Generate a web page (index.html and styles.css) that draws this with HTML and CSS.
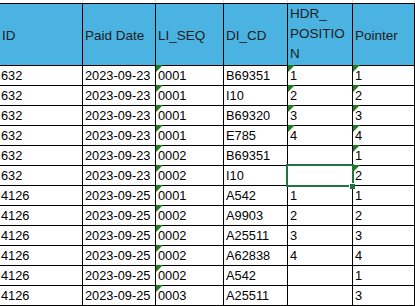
FILE: index.html
```html
<!DOCTYPE html>
<html>
<head>
<meta charset="utf-8">
<link rel="stylesheet" href="styles.css">
</head>
<body>
<div class="sheet">
  <div class="row strip"><div></div><div></div><div></div><div></div><div></div><div></div></div>
  <div class="row head">
    <div class="hc">ID</div>
    <div class="hc">Paid Date</div>
    <div class="hc">LI_SEQ</div>
    <div class="hc">DI_CD</div>
    <div class="hc wrap">HDR_<br>POSITIO<br>N</div>
    <div class="hc">Pointer</div>
  </div>
  <div class="row"><div class="c id">632</div><div class="c">2023-09-23</div><div class="c f">0001</div><div class="c">B69351</div><div class="c f">1</div><div class="c f">1</div></div>
  <div class="row"><div class="c id">632</div><div class="c">2023-09-23</div><div class="c f">0001</div><div class="c">I10</div><div class="c f">2</div><div class="c f">2</div></div>
  <div class="row"><div class="c id">632</div><div class="c">2023-09-23</div><div class="c f">0001</div><div class="c">B69320</div><div class="c f">3</div><div class="c f">3</div></div>
  <div class="row"><div class="c id">632</div><div class="c">2023-09-23</div><div class="c f">0001</div><div class="c">E785</div><div class="c f">4</div><div class="c f">4</div></div>
  <div class="row"><div class="c id">632</div><div class="c">2023-09-23</div><div class="c f">0002</div><div class="c">B69351</div><div class="c"></div><div class="c f">1</div></div>
  <div class="row"><div class="c id">632</div><div class="c">2023-09-23</div><div class="c f">0002</div><div class="c">I10</div><div class="c sel"><span class="handle"></span></div><div class="c f">2</div></div>
  <div class="row"><div class="c id">4126</div><div class="c">2023-09-25</div><div class="c f">0001</div><div class="c">A542</div><div class="c">1</div><div class="c">1</div></div>
  <div class="row"><div class="c id">4126</div><div class="c">2023-09-25</div><div class="c f">0002</div><div class="c">A9903</div><div class="c">2</div><div class="c">2</div></div>
  <div class="row"><div class="c id">4126</div><div class="c">2023-09-25</div><div class="c f">0002</div><div class="c">A25511</div><div class="c">3</div><div class="c">3</div></div>
  <div class="row"><div class="c id">4126</div><div class="c">2023-09-25</div><div class="c f">0002</div><div class="c">A62838</div><div class="c">4</div><div class="c">4</div></div>
  <div class="row"><div class="c id">4126</div><div class="c">2023-09-25</div><div class="c f">0002</div><div class="c">A542</div><div class="c"></div><div class="c">1</div></div>
  <div class="row"><div class="c id">4126</div><div class="c">2023-09-25</div><div class="c f">0003</div><div class="c">A25511</div><div class="c"></div><div class="c">3</div></div>
  <div class="row strip"><div></div><div></div><div></div><div></div><div></div><div></div></div>
</div>
</body>
</html>
```
FILE: styles.css
```css
html, body {
  margin: 0;
  padding: 0;
  background: #ffffff;
}
.sheet {
  width: 415px;
  height: 306px;
  overflow: hidden;
  font-family: "Liberation Sans", Arial, sans-serif;
  font-size: 12.8px;
  color: #000;
}
.row {
  display: grid;
  grid-template-columns: 83px 73px 68px 64px 65px 62px;
}
.row > div {
  box-sizing: border-box;
  border-right: 1px solid #000;
}
.strip {
  height: 3px;
}
.strip > div {
  border-right: 1px solid #dadada !important;
}
.head {
  height: 61px;
  background: #4bb3e1;
  border-top: 1px solid #000;
  border-bottom: 1px solid #000;
}
.hc {
  display: flex;
  align-items: center;
  padding-left: 2px;
  padding-top: 2px;
  font-size: 13.5px;
  color: #1c1c1c;
  line-height: 20px;
  white-space: nowrap;
}
.hc.wrap {
  padding-top: 0;
  align-items: flex-start;
}
.c {
  position: relative;
  height: 20px;
  border-bottom: 1px solid #000;
  line-height: 19px;
  padding-left: 2px;
  white-space: nowrap;
}
.c.id {
  padding-left: 1px;
}
.f::before {
  content: "";
  position: absolute;
  left: 0;
  top: -1px;
  width: 7px;
  height: 7px;
  background: #1e7b1e;
  clip-path: polygon(0 0, 100% 0, 0 100%);
  z-index: 3;
}
.sel::after {
  content: "";
  position: absolute;
  left: -2px;
  top: -2px;
  right: -2px;
  bottom: -2px;
  border: 2px solid #217346;
  z-index: 2;
}
.handle {
  position: absolute;
  right: -3px;
  bottom: -4px;
  width: 5px;
  height: 5px;
  background: #217346;
  border-left: 1px solid #fff;
  border-top: 1px solid #fff;
  z-index: 4;
}
```
